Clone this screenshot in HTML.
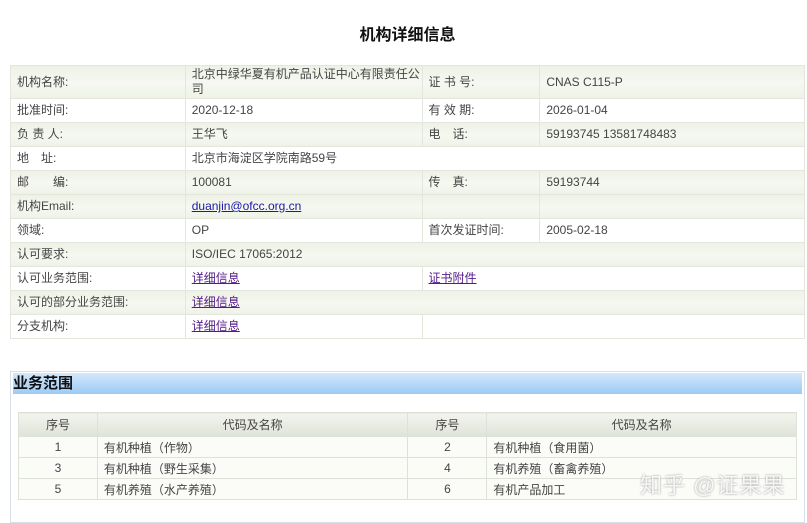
<!DOCTYPE html>
<html><head><meta charset="utf-8">
<style>
body{margin:0;width:807px;height:515px;background:#fff;font-family:"Liberation Sans","Noto Sans CJK SC",sans-serif;font-size:12px;color:#444;position:relative;overflow:hidden}
h1{position:absolute;left:0;width:815px;top:21px;margin:0;text-align:center;font-size:16px;font-weight:bold;color:#111}
table{border-collapse:collapse;position:absolute}
#t td{border:1px solid #e2e6dc;padding:0 0 0 6px;height:23px;line-height:15px}
.g td{background:linear-gradient(#eef2e6,#f6f8f1 50%,#eef2e6)}
a{color:#551a8b;text-decoration:underline}
a.b{color:#1a1aa6}
#box{position:absolute;left:10px;top:371px;width:793px;height:150px;border:1px solid #d8dfe8}
#bar{position:absolute;left:13px;top:373px;width:789px;height:21px;background:linear-gradient(#d3e8fc,#9ccaf5);font-weight:bold;font-size:15px;line-height:21px;color:#111}
#s td{border:1px solid #dde2d8;height:20px;padding:0 0 0 6px}
#s tr.h td{background:linear-gradient(#f3f4ef,#dfe3d8);text-align:center;height:23px;padding:0}
#s td.c{text-align:center;padding:0}
#s tr.r td{background:#fbfcf8}
#wm{position:absolute;left:640px;top:468px;font-size:22px;color:rgba(255,255,255,.85);text-shadow:0 0 2px #999;letter-spacing:1px}
</style></head><body>
<h1>机构详细信息</h1>
<table id="t" style="left:10px;top:65px;width:795px">
<colgroup><col style="width:175px"><col style="width:237px"><col style="width:118px"><col style="width:265px"></colgroup>
<tr class="g"><td style="height:32px">机构名称:</td><td>北京中绿华夏有机产品认证中心有限责任公司</td><td>证 书 号:</td><td>CNAS C115-P</td></tr>
<tr><td>批准时间:</td><td>2020-12-18</td><td>有 效 期:</td><td>2026-01-04</td></tr>
<tr class="g"><td>负 责 人:</td><td>王华飞</td><td>电　话:</td><td>59193745 13581748483</td></tr>
<tr><td>地　址:</td><td colspan="3">北京市海淀区学院南路59号</td></tr>
<tr class="g"><td>邮　　编:</td><td>100081</td><td>传　真:</td><td>59193744</td></tr>
<tr class="g"><td>机构Email:</td><td><a class="b">duanjin@ofcc.org.cn</a></td><td></td><td></td></tr>
<tr><td>领域:</td><td>OP</td><td>首次发证时间:</td><td>2005-02-18</td></tr>
<tr class="g"><td>认可要求:</td><td colspan="3">ISO/IEC 17065:2012</td></tr>
<tr><td>认可业务范围:</td><td><a>详细信息</a></td><td colspan="2"><a>证书附件</a></td></tr>
<tr class="g"><td>认可的部分业务范围:</td><td colspan="3"><a>详细信息</a></td></tr>
<tr><td>分支机构:</td><td><a>详细信息</a></td><td colspan="2"></td></tr>
</table>
<div id="box"></div>
<div id="bar">业务范围</div>
<table id="s" style="left:18px;top:412px;width:779px">
<colgroup><col style="width:79px"><col style="width:311px"><col style="width:79px"><col style="width:310px"></colgroup>
<tr class="h"><td>序号</td><td>代码及名称</td><td>序号</td><td>代码及名称</td></tr>
<tr class="r"><td class="c">1</td><td>有机种植（作物）</td><td class="c">2</td><td>有机种植（食用菌）</td></tr>
<tr class="r"><td class="c">3</td><td>有机种植（野生采集）</td><td class="c">4</td><td>有机养殖（畜禽养殖）</td></tr>
<tr class="r"><td class="c">5</td><td>有机养殖（水产养殖）</td><td class="c">6</td><td>有机产品加工</td></tr>
</table>
<div id="wm">知乎 @证果果</div>
</body></html>
